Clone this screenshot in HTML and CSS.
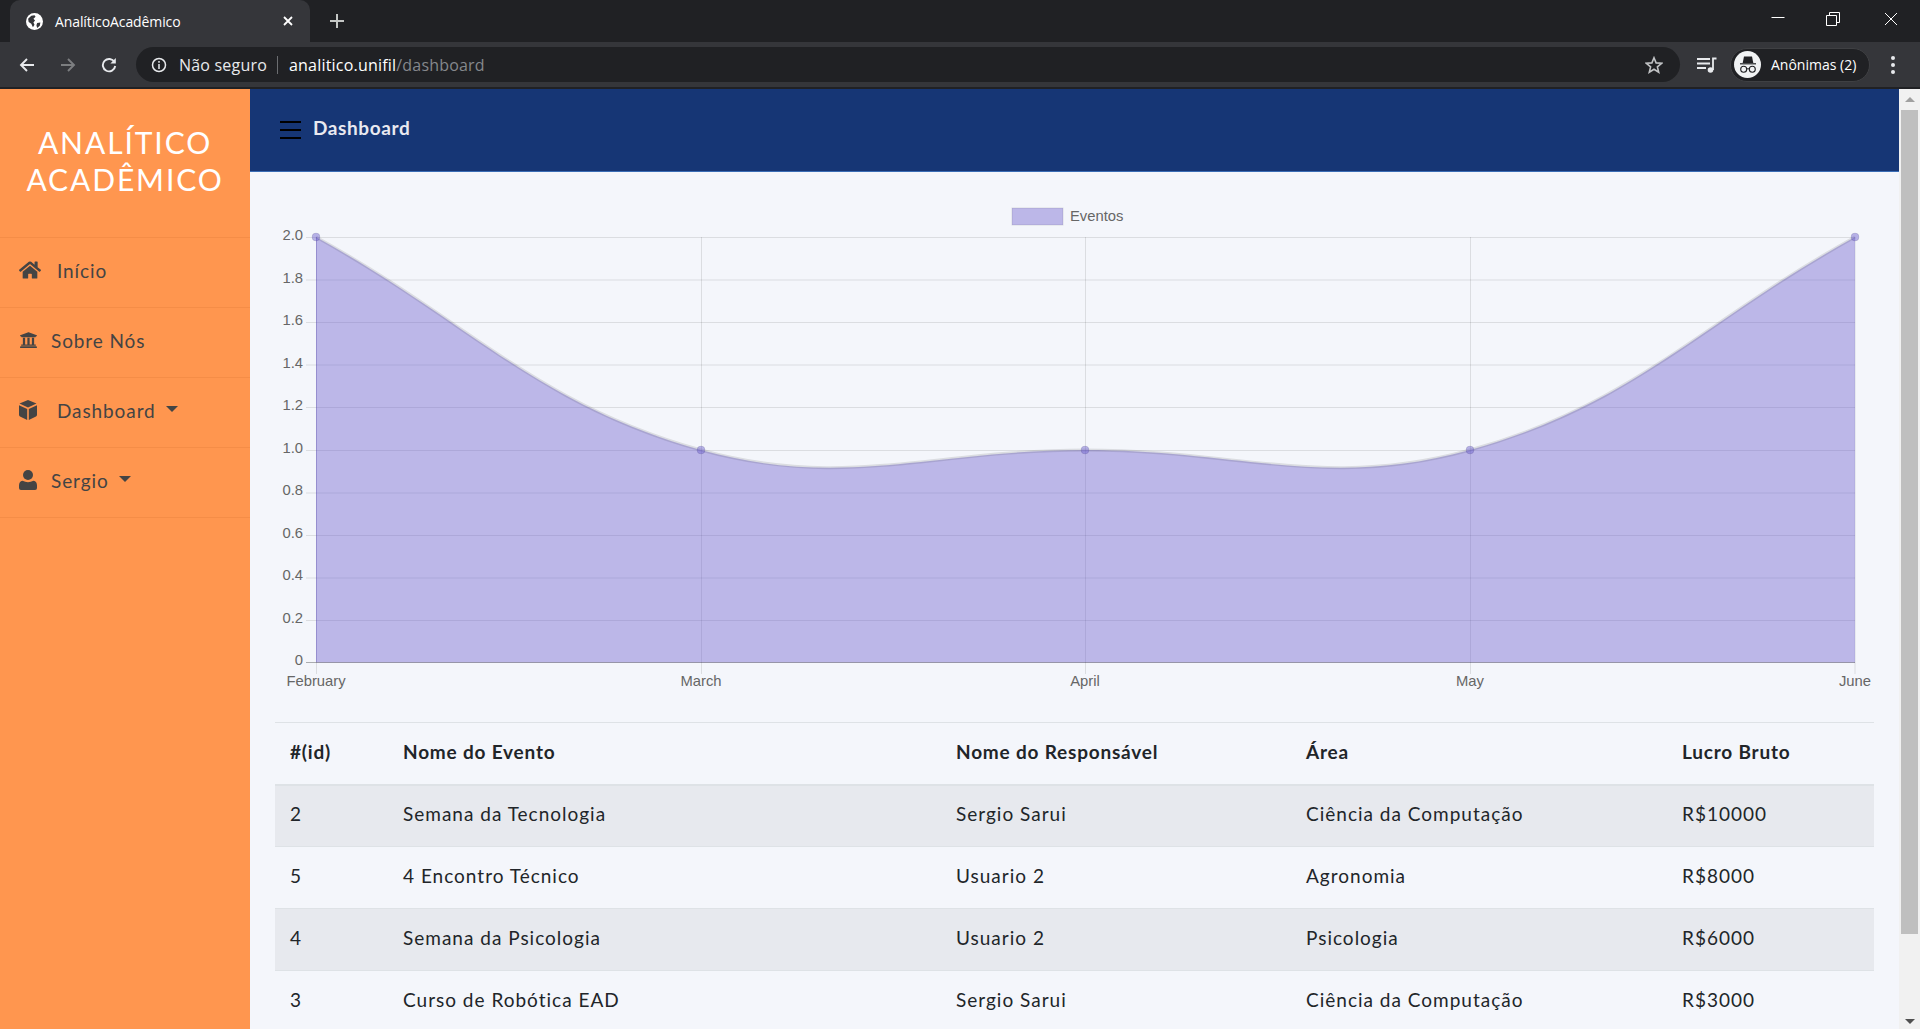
FILE: index.html
```html
<!DOCTYPE html>
<html lang="pt-BR">
<head>
<meta charset="utf-8">
<title>AnalíticoAcadêmico</title>
<link rel="stylesheet" href="styles.css">
</head>
<body>
<header class="browser">
  <div class="tabstrip">
    <div class="tab">
      <svg class="favicon" viewBox="0 0 16 16"><circle cx="8" cy="8" r="8" fill="#fff"/><path class="dark-fill" d="M2 5.5 5 2.5 8 2 9 3.5 7 5.5 8.5 7 7 9 8 11 6.5 13.5 5 10 2.5 8.5zM10.5 9.5 13.5 9 13 12 10.5 14 9.8 11.5z"/></svg>
      <span class="tab-title">AnalíticoAcadêmico</span>
      <svg class="tab-close" viewBox="0 0 10 10"><path d="M1 1 9 9M9 1 1 9"/></svg>
    </div>
    <svg class="new-tab" viewBox="0 0 14 14"><path d="M7 0V14M0 7H14"/></svg>
    <div class="window-controls">
      <svg class="win-icon win-min" viewBox="0 0 14 14"><path d="M0.5 5.5H13.5"/></svg>
      <svg class="win-icon" viewBox="0 0 14 14"><path d="M0.5 3.5H10.5V13.5H0.5ZM3.5 3.5V0.5H13.5V10.5H10.5"/></svg>
      <svg class="win-icon" viewBox="0 0 14 14"><path d="M1 1 13 13M13 1 1 13"/></svg>
    </div>
  </div>
  <div class="toolbar">
    <svg class="nav-icon" viewBox="0 0 16 16"><path d="M15 8H2M8 2 2 8 8 14"/></svg>
    <svg class="nav-icon nav-off" viewBox="0 0 16 16"><path d="M1 8H14M8 2 14 8 8 14"/></svg>
    <svg class="nav-icon nav-reload" viewBox="0 0 16 16"><path d="M13.5 5.2A6.2 6.2 0 1 0 14.2 9"/><path class="light-fill" d="M14.8 1V6.4H9.4z"/></svg>
    <div class="omnibox">
      <svg class="info-icon" viewBox="0 0 16 16"><circle cx="8" cy="8" r="6.5"/><path d="M8 7V12M8 4V5.7"/></svg>
      <span class="insecure">Não seguro</span>
      <span class="omni-sep"></span>
      <span class="url">analitico.unifil<span class="url-path">/dashboard</span></span>
      <svg class="star" viewBox="0 0 18 18"><path d="M9 1.8 11.1 6.9 16.6 7.3 12.4 10.9 13.7 16.2 9 13.3 4.3 16.2 5.6 10.9 1.4 7.3 6.9 6.9Z"/></svg>
    </div>
    <svg class="media-icon" viewBox="0 0 20 16"><path class="light-stroke" d="M0 2H13M0 6.5H13M0 11H9"/><path class="light-stroke" d="M16 13V1.5H19.5"/><circle class="light-fill" cx="13.5" cy="13" r="2.8"/></svg>
    <div class="profile">
      <span class="avatar">
        <svg class="incognito" viewBox="0 0 16 17"><path d="M4 0.5H12L13.3 7H2.7Z"/><path d="M0 7.8H16" class="dark-line"/><circle class="glass" cx="3.7" cy="13.3" r="3"/><circle class="glass" cx="12.3" cy="13.3" r="3"/><path class="dark-line thin" d="M6.7 12.8H9.3"/></svg>
      </span>
      <span class="profile-name">Anônimas (2)</span>
    </div>
    <svg class="kebab" viewBox="0 0 6 20"><circle cx="3" cy="3" r="2"/><circle cx="3" cy="10" r="2"/><circle cx="3" cy="17" r="2"/></svg>
  </div>
</header>

<div class="app">
  <aside class="sidebar">
    <h1 class="brand">ANALÍTICO<br>ACADÊMICO</h1>
    <nav>
      <a class="nav-item">
        <svg class="fa" viewBox="0 0 576 512"><path d="M280.37 148.26L96 300.11V464a16 16 0 0 0 16 16l112.06-.29a16 16 0 0 0 15.92-16V368a16 16 0 0 1 16-16h64a16 16 0 0 1 16 16v95.64a16 16 0 0 0 16 16.05L464 480a16 16 0 0 0 16-16V300L295.67 148.26a12.19 12.19 0 0 0-15.3 0zM571.6 251.47L488 182.56V44.05a12 12 0 0 0-12-12h-56a12 12 0 0 0-12 12v72.61L318.47 43a48 48 0 0 0-61 0L4.34 251.47a12 12 0 0 0-1.6 16.9l25.5 31A12 12 0 0 0 45.15 301l235.22-193.74a12.19 12.19 0 0 1 15.3 0L530.9 301a12 12 0 0 0 16.9-1.6l25.5-31a12 12 0 0 0-1.7-16.93z"/></svg>
        <span class="nav-text wide">Início</span>
      </a>
      <a class="nav-item">
        <svg class="fa narrow" viewBox="0 0 512 512"><path d="M496 128v16a8 8 0 0 1-8 8h-24v12c0 6.627-5.373 12-12 12H60c-6.627 0-12-5.373-12-12v-12H24a8 8 0 0 1-8-8v-16a8 8 0 0 1 4.941-7.392l232-88a7.996 7.996 0 0 1 6.118 0l232 88A8 8 0 0 1 496 128zm-24 304H40c-13.255 0-24 10.745-24 24v16a8 8 0 0 0 8 8h464a8 8 0 0 0 8-8v-16c0-13.255-10.745-24-24-24zM96 192v192H60c-6.627 0-12 5.373-12 12v20h416v-20c0-6.627-5.373-12-12-12h-36V192h-64v192h-64V192h-64v192h-64V192H96z"/></svg>
        <span class="nav-text">Sobre Nós</span>
      </a>
      <a class="nav-item">
        <svg class="fa cube" viewBox="0 0 18 20"><path d="M9 0 17.5 3.6 9 7.6 0.5 3.6ZM0 5.2 8.2 9.1V20L1 16.4Q0 15.9 0 14.8ZM18 5.2V14.8Q18 15.9 17 16.4L9.8 20V9.1Z"/></svg>
        <span class="nav-text wide">Dashboard</span>
        <span class="caret"></span>
      </a>
      <a class="nav-item">
        <svg class="fa person" viewBox="0 0 18 20" preserveAspectRatio="none"><circle cx="9" cy="5" r="5"/><path d="M3.5 10.8Q9 13.6 14.5 10.8Q18 11.6 18 15.5V18Q18 20 16 20H2Q0 20 0 18V15.5Q0 11.6 3.5 10.8Z"/></svg>
        <span class="nav-text">Sergio</span>
        <span class="caret"></span>
      </a>
    </nav>
  </aside>

  <main class="content">
    <div class="topbar">
      <span class="hamburger"><i></i><i></i><i></i></span>
      <span class="topbar-title">Dashboard</span>
    </div>
    <div class="page">
      <svg class="chart" viewBox="275 172 1599 540" width="1599" height="540">
        <rect class="legend-box" x="1012" y="208" width="51" height="17"/>
        <text class="tick" x="1070" y="221">Eventos</text>
        <g class="grid">
          <path d="M306 237.5H1855M306 280H1855M306 322.5H1855M306 365H1855M306 407.5H1855M306 450.5H1855M306 493H1855M306 535.5H1855M306 578H1855M306 620.5H1855"/>
          <path d="M316.5 237V674M701.5 237V674M1085.5 237V674M1470.5 237V674M1855 237V674"/>
        </g>
        <path class="area" d="M316 237C470 322.2 536.8 404.5 701 450C844.4 489.7 931.2 450 1085 450C1238.8 450 1326.4 489.7 1470 450C1634.4 404.5 1701 322.2 1855 237V662.5H316Z"/>
        <path class="curve" d="M316 237C470 322.2 536.8 404.5 701 450C844.4 489.7 931.2 450 1085 450C1238.8 450 1326.4 489.7 1470 450C1634.4 404.5 1701 322.2 1855 237"/>
        <path class="axis" d="M306 662.5H1855"/>
        <path class="y-axis" d="M316.5 237V662"/>
        <g class="points">
          <circle cx="316" cy="237" r="4"/><circle cx="701" cy="450" r="4"/><circle cx="1085" cy="450" r="4"/><circle cx="1470" cy="450" r="4"/><circle cx="1855" cy="237" r="4"/>
        </g>
        <g class="tick y-ticks">
          <text x="303" y="240">2.0</text><text x="303" y="283">1.8</text><text x="303" y="325">1.6</text><text x="303" y="368">1.4</text><text x="303" y="410">1.2</text><text x="303" y="453">1.0</text><text x="303" y="495">0.8</text><text x="303" y="538">0.6</text><text x="303" y="580">0.4</text><text x="303" y="623">0.2</text><text x="303" y="665">0</text>
        </g>
        <g class="tick x-ticks">
          <text x="316" y="686">February</text><text x="701" y="686">March</text><text x="1085" y="686">April</text><text x="1470" y="686">May</text><text x="1855" y="686">June</text>
        </g>
      </svg>
      <table class="events">
        <colgroup><col class="c1"><col class="c2"><col class="c3"><col class="c4"><col class="c5"></colgroup>
        <thead>
          <tr><th>#(id)</th><th>Nome do Evento</th><th>Nome do Responsável</th><th>Área</th><th>Lucro Bruto</th></tr>
        </thead>
        <tbody>
          <tr><td>2</td><td>Semana da Tecnologia</td><td>Sergio Sarui</td><td>Ciência da Computação</td><td>R$10000</td></tr>
          <tr><td>5</td><td>4 Encontro Técnico</td><td>Usuario 2</td><td>Agronomia</td><td>R$8000</td></tr>
          <tr><td>4</td><td>Semana da Psicologia</td><td>Usuario 2</td><td>Psicologia</td><td>R$6000</td></tr>
          <tr><td>3</td><td>Curso de Robótica EAD</td><td>Sergio Sarui</td><td>Ciência da Computação</td><td>R$3000</td></tr>
        </tbody>
      </table>
    </div>
  </main>

  <div class="scrollbar">
    <span class="arrow up"></span>
    <span class="thumb"></span>
    <span class="arrow down"></span>
  </div>
</div>
</body>
</html>
```

FILE: styles.css
```css
* { box-sizing: border-box; }
html { height: 100%; overflow: hidden; }
body {
  margin: 0;
  height: 100vh;
  display: flex;
  flex-direction: column;
  overflow: hidden;
  background: #f4f6fb;
  font-family: Lato, "Open Sans", sans-serif;
  color: #212529;
}

/* Browser chrome */
.browser { flex: none; height: 89px; background: #202124; display: flex; flex-direction: column; }
.tabstrip { height: 42px; display: flex; align-items: flex-end; padding-left: 10px; }
.tab {
  width: 300px; height: 42px; background: #35363a; border-radius: 10px 10px 0 0;
  display: flex; align-items: center; padding: 0 17px 0 16px; color: #fff;
}
.favicon { width: 17px; height: 17px; flex: none; }
.dark-fill { fill: #35363a; }
.tab-title { flex: 1; margin-left: 12px; font: 14px "Open Sans", sans-serif; letter-spacing: -0.1px; }
.tab-close { width: 10px; height: 10px; fill: none; stroke: #fff; stroke-width: 1.8; }
.new-tab { width: 14px; height: 14px; margin: 0 0 14px 20px; fill: none; stroke: #c4c7c5; stroke-width: 2; }
.window-controls { margin-left: auto; align-self: flex-start; display: flex; gap: 44px; padding: 12px 22px 0 0; }
.win-icon { width: 14px; height: 14px; fill: none; stroke: #fff; stroke-width: 1; }
.win-min { margin-right: -3px; }
.toolbar { height: 45px; background: #35363a; display: flex; align-items: center; padding-left: 19px; }
.nav-icon { width: 16px; height: 16px; margin-right: 25px; fill: none; stroke: #e8eaed; stroke-width: 1.9; flex: none; }
.nav-off { stroke: #7c7e80; }
.nav-reload { margin-right: 19px; }
.light-fill { fill: #e8eaed; stroke: none; }
.light-stroke { fill: none; stroke: #e8eaed; stroke-width: 1.8; }
.omnibox {
  width: 1544px; height: 35px; background: #202124; border-radius: 18px;
  display: flex; align-items: center; padding: 0 17px 0 15px; color: #e8eaed;
  font: 16px "Open Sans", sans-serif; letter-spacing: 0.2px;
}
.info-icon { width: 16px; height: 16px; fill: none; stroke: #e8eaed; stroke-width: 1.5; flex: none; }
.insecure { margin-left: 12px; }
.omni-sep { width: 1px; height: 18px; background: #6b6d70; margin: 0 11px 0 10px; }
.url { flex: 1; color: #fff; }
.url-path { color: #85888c; }
.star { width: 18px; height: 18px; fill: none; stroke: #c0c2c4; stroke-width: 1.6; }
.media-icon { width: 20px; height: 16px; margin-left: 17px; flex: none; }
.profile {
  width: 140px; height: 34px; margin-left: 13px; border-radius: 17px; background: #202124;
  border: 1px solid #3f4043; display: flex; align-items: center; padding-left: 3px; flex: none;
}
.avatar { width: 27px; height: 27px; border-radius: 50%; background: #f1f3f4; display: flex; align-items: center; justify-content: center; }
.incognito { width: 16px; height: 17px; fill: #202124; }
.dark-line { stroke: #202124; stroke-width: 1.2; fill: none; }
.thin { stroke-width: 1; }
.glass { fill: none; stroke: #202124; stroke-width: 1.1; }
.profile-name { margin-left: 10px; color: #fff; font: 14px "Open Sans", sans-serif; }
.kebab { width: 6px; height: 20px; margin-left: 20px; fill: #e8eaed; flex: none; }

/* App */
.app { flex: 1; min-height: 0; display: flex; overflow: hidden; }
.sidebar { width: 250px; flex: none; background: #ff964f; color: #444; }
.brand {
  height: 149px; margin: 0; padding-top: 35px; text-align: center; color: #fff;
  font-size: 30px; line-height: 37px; font-weight: 400; letter-spacing: 1.9px;
  border-bottom: 1px solid #f58d47;
}
.nav-item {
  height: 70px; display: flex; align-items: center; padding: 0 0 5px 19px;
  border-bottom: 1px solid #f58d47; font-size: 19px;
}
.fa { width: 22px; height: 20px; fill: #444; flex: none; }
.narrow { width: 19px; height: 18px; }
.cube { width: 18px; height: 20px; margin-right: 4px; }
.person { width: 18px; height: 20px; margin-right: 1px; }
.nav-text { margin-left: 13px; letter-spacing: 0.9px; }
.nav-text.wide { margin-left: 16px; }
.caret {
  margin-left: 10px; width: 0; height: 0; margin-top: -3px;
  border-left: 6px solid transparent; border-right: 6px solid transparent; border-top: 6px solid #444;
}

.content { flex: 1; min-width: 0; display: flex; flex-direction: column; }
.topbar {
  flex: none; height: 83px; background: #163675; border-bottom: 1px solid #3a6db5;
  display: flex; align-items: center; padding: 0 0 2px 30px;
}
.hamburger { width: 21px; display: flex; flex-direction: column; gap: 6px; margin-top: 2px; }
.hamburger i { display: block; height: 2px; background: #000; }
.topbar-title { margin-left: 12px; font-size: 19px; font-weight: 700; color: #e9e9f0; letter-spacing: 0.6px; margin-top: -4px; }
.page { flex: 1; min-height: 0; padding: 0 25px; overflow: hidden; }
.chart { display: block; margin-bottom: 10px; }
.tick { font: 14.8px "Liberation Sans", Arial, sans-serif; fill: #666; }
.y-ticks { text-anchor: end; }
.x-ticks { text-anchor: middle; }
.grid path { fill: none; stroke: rgba(0,0,0,0.1); stroke-width: 1; }
.legend-box { fill: rgba(105,90,205,0.4); stroke: rgba(0,0,0,0.1); }
.area { fill: rgba(105,90,205,0.4); }
.curve { fill: none; stroke: rgba(0,0,0,0.1); stroke-width: 3; }
.axis { fill: none; stroke: rgba(0,0,0,0.3); stroke-width: 1; }
.y-axis { fill: none; stroke: rgba(60,40,170,0.2); stroke-width: 1; }
.points circle { fill: rgba(105,90,205,0.45); stroke: rgba(0,0,0,0.08); }

.events { width: 1599px; border-collapse: collapse; table-layout: fixed; font-size: 19px; }
.c1 { width: 113px; } .c2 { width: 553px; } .c3 { width: 350px; } .c4 { width: 376px; } .c5 { width: 207px; }
.events th, .events td { text-align: left; padding: 0 15px 4px; }
.events th { height: 62px; border-top: 1px solid #dee2e6; border-bottom: 2px solid #dee2e6; font-weight: 700; letter-spacing: 0.8px; }
.events td { height: 62px; border-top: 1px solid #dee2e6; font-weight: 400; letter-spacing: 1px; }
.events tbody tr:nth-child(odd) { background: rgba(0,0,0,0.05); }

/* Scrollbar */
.scrollbar { width: 21px; flex: none; background: #f1f1f1; display: flex; flex-direction: column; align-items: center; }
.thumb { width: 17px; height: 824px; flex: none; background: #bfbfbf; }
.arrow { width: 0; height: 0; flex: none; border-left: 5px solid transparent; border-right: 5px solid transparent; }
.arrow.up { border-bottom: 5px solid #a0a0a0; margin: 8px 0; }
.arrow.down { border-top: 5px solid #505050; margin-top: 85px; }
```
